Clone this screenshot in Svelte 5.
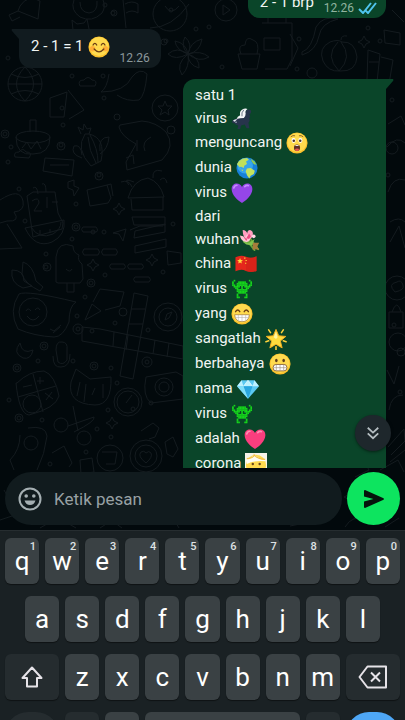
<script>
  const lines = [
    { text: 'satu 1' },
    { text: 'virus', emoji: 'skunk', low: true },
    { text: 'menguncang', emoji: 'gasp' },
    { text: 'dunia', emoji: 'earth' },
    { text: 'virus', emoji: 'purple' },
    { text: 'dari' },
    { text: 'wuhan', emoji: 'bouquet', low: true, tight: true },
    { text: 'china', emoji: 'flag' },
    { text: 'virus', emoji: 'alien' },
    { text: 'yang', emoji: 'grin' },
    { text: 'sangatlah', emoji: 'star' },
    { text: 'berbahaya', emoji: 'grimace' },
    { text: 'nama', emoji: 'gem' },
    { text: 'virus', emoji: 'alien' },
    { text: 'adalah', emoji: 'pink' },
    { text: 'corona', emoji: 'bandage' }
  ];
  const top = [...'qwertyuiop'];
  const middle = [...'asdfghjkl'];
  const bottom = [...'zxcvbnm'];

  const alienRows = [
    '.#.........#.',
    '#...#####...#',
    '#..#######..#',
    '##.#######.##',
    '.####.#.####.',
    '..##..#..##..',
    '...#######...',
    '...#######...',
    '....#####....',
    '...#.....#...',
    '...#.....#...',
    '...##...##...'
  ];
  const alienCells = alienRows.flatMap((row, y) =>
    [...row].flatMap((c, x) => (c === '#' ? [{ x, y }] : []))
  );

  const dots = [
    [5, 134], [63, 125], [105, 5], [171, 10], [61, 145], [99, 175], [76, 204], [117, 49], [11, 147], [8, 162],
    [19, 189], [25, 221], [76, 227], [93, 232], [104, 232], [72, 239], [46, 254], [46, 267], [91, 283],
    [105, 275], [163, 272], [173, 224], [85, 297], [77, 316], [78, 329], [115, 323], [92, 331], [44, 346],
    [17, 368], [94, 366], [111, 368], [38, 361], [73, 361], [148, 330], [147, 362], [117, 383], [9, 400],
    [19, 418], [42, 420], [108, 410], [97, 429], [111, 437], [50, 464], [86, 452], [133, 409], [151, 403],
    [113, 13], [103, 76], [72, 76], [104, 98], [62, 108], [8, 58], [166, 41], [188, 106], [196, 29],
    [209, 27], [222, 67], [297, 69], [299, 39], [380, 41], [368, 28], [392, 100], [388, 175], [394, 325], [400, 392]
  ];
  const rings = [
    [61, 146, 4], [117, 117, 3], [99, 176, 4], [76, 227, 4], [47, 267, 4], [91, 283, 4], [78, 329, 5],
    [94, 366, 4], [147, 362, 5], [44, 346, 4], [17, 368, 4], [19, 418, 4], [171, 130, 4], [114, 13, 3],
    [164, 42, 3], [312, 73, 5], [5, 134, 4], [123, 312, 4], [392, 148, 6], [401, 352, 4]
  ];
  const sparkles = [[119, 209], [93, 265], [152, 260], [112, 423], [364, 42], [200, 492], [350, 497]];
</script>

{#snippet face()}
  <circle cx="12" cy="12" r="11.5" fill="#fbc02b" />
  <circle cx="12" cy="11.4" r="10.4" fill="#ffda4e" />
{/snippet}

{#snippet emoji(name)}
  <svg class="emoji" viewBox="0 0 24 24" role="img" aria-label={name}>
    {#if name === 'smile'}
      {@render face()}
      <circle cx="5" cy="14" r="3" fill="#ff9d2e" opacity=".7" />
      <circle cx="19" cy="14" r="3" fill="#ff9d2e" opacity=".7" />
      <path d="M5.5 9.8q2-3.6 4 0M14.5 9.8q2-3.6 4 0M6.7 14.2q5.3 6 10.6 0" fill="none" stroke="#6c3d14" stroke-width="1.4" stroke-linecap="round" />
    {:else if name === 'gasp'}
      {@render face()}
      <ellipse cx="8.3" cy="9.3" rx="2.2" ry="2.7" fill="#fff" />
      <ellipse cx="15.7" cy="9.3" rx="2.2" ry="2.7" fill="#fff" />
      <circle cx="8.5" cy="9.6" r="1.4" fill="#4e342e" />
      <circle cx="15.5" cy="9.6" r="1.4" fill="#4e342e" />
      <path d="M5.500 5q2-1.800 4-1M14.500 4q2-.8 4 1" fill="none" stroke="#8b5a1b" stroke-linecap="round" />
      <ellipse cx="12" cy="17.300" rx="3.300" ry="3.600" fill="#5d3022" />
      <path d="M9.600 15.300q2.400-2 4.800 0z" fill="#fff" />
      <ellipse cx="12" cy="19.300" rx="2.200" ry="1.300" fill="#ef5350" />
    {:else if name === 'grin'}
      {@render face()}
      <path d="M5 9.5q2.2-3.8 4.6 0M14.4 9.5q2.3-3.8 4.6 0" fill="none" stroke="#6c3d14" stroke-width="1.5" stroke-linecap="round" />
      <path d="M4 12.8h16q-.5 7.6-8 7.6t-8-7.6z" fill="#fff" stroke="#9b6a2b" stroke-width=".7" />
      <path d="M4.5 15.8h15M8 13v6M12 13v7M16 13v6" stroke="#b5afa5" stroke-width=".6" />
    {:else if name === 'grimace'}
      {@render face()}
      <ellipse cx="8" cy="8.2" rx="1.4" ry="1.9" fill="#5d3b1a" />
      <ellipse cx="16" cy="8.2" rx="1.4" ry="1.9" fill="#5d3b1a" />
      <rect x="4.5" y="12.5" width="15" height="7" rx="3.2" fill="#fff" stroke="#8b6236" />
      <path d="M5 16h14M8 13v6M12 13v6M16 13v6" stroke="#9e917f" stroke-width=".7" />
    {:else if name === 'bandage'}
      <rect width="24" height="24" fill="#f6f4e8" />
      <circle cx="12" cy="13" r="11" fill="#ffda4e" />
      <path d="M1 8Q7 6 10 1q5 6 13 6l-1 2Q9 8 2 12z" fill="#fffdf2" />
      <path d="M2 6q7 0 8-4 4 5 12 5" fill="none" stroke="#f2be3f" stroke-width="1.3" />
      <circle cx="8.5" cy="12" r="1.3" fill="#6c481b" />
      <circle cx="16" cy="12" r="1.3" fill="#6c481b" />
      <path d="M8 19q4-3 8 0" fill="none" stroke="#6c481b" />
    {:else if name === 'purple' || name === 'pink'}
      <path d="M12 23C7 19.5 1 14.5.7 8.2.5 3.6 3.5 1.7 6.2 1.7c2.7 0 4.7 1.5 5.8 3.8 1.1-2.3 3.1-3.8 5.8-3.8 2.7 0 5.7 1.9 5.5 6.5C23 14.5 17 19.5 12 23z" fill={name === 'pink' ? '#fa3e7e' : '#9546e8'} />
      <path d="M3 6.5q1-3 3.5-3M15 5q2-2 4-1" fill="none" stroke={name === 'pink' ? '#ff8db3' : '#c58bff'} stroke-width="1.8" stroke-linecap="round" />
    {:else if name === 'earth'}
      <circle cx="12" cy="12" r="11.5" fill="#1780d8" />
      <circle cx="10" cy="9.5" r="8.5" fill="#35a4ed" />
      <path d="M3 4.500 7 1.800l5-.8 2 2-3 2 1 2.500-3 2-.5 2.500-3-1.500-2 .5 2 2.500 2.500.5-1 1.500L3.500 10.500 1 8z" fill="#bfe05c" />
      <path d="m12 12.500 4-.5 4.500 3-1 3.500-3.500 2-1.500 3-2.500-3.500-1.500-4.500z" fill="#c4e35d" />
      <path d="m16 2 4 2.500 2.500 4-3-.5-2-2.500z" fill="#8fcb54" />
    {:else if name === 'flag'}
      <path d="M.5 4.500q6-3 11.500-.5t11.500-.5v16q-6 2.500-11.500 0T.5 20z" fill="#e5261c" />
      <path d="M12 4q6 2.500 11.500-.5v16q-6 2.500-11.500 0z" fill="#c81e17" opacity=".45" />
      <path d="m5.500 5.500.9 2.100 2.300.2-1.800 1.500.6 2.200-2-1.200-2 1.200.6-2.200-1.800-1.500 2.300-.2z" fill="#ffd83b" />
      <path d="M10 5h1.300v1.300H10zM11.500 7.500h1.300v1.300h-1.300zM11 10.500h1.300v1.300H11z" fill="#ffd83b" />
    {:else if name === 'star'}
      <path d="m12 1.500 3 7 7.700.7-5.900 5 1.900 7.500-6.700-4-6.700 4 1.900-7.500-5.900-5L9 8.500z" fill="#ffdc3d" stroke="#f7ae20" stroke-linejoin="round" />
      <path d="m12 4 1.800 6L12 12 9.500 10z" fill="#fff6a3" />
      <path d="m4 2 2 3M20 2l-2 3M1 15l3-1M23 15l-3-1M12 20.500V24" stroke="#ffd43d" stroke-width="1.700" stroke-linecap="round" />
    {:else if name === 'gem'}
      <path d="M5 2.500h14l5 6.500L12 22.500 0 9z" fill="#5cc9f2" />
      <path d="M5 2.500 7 9H0zM12 2.500 17 9H7zM19 2.500 24 9h-7z" fill="#bdf1ff" />
      <path d="M7 9h10l-5 13.500z" fill="#29a6df" />
      <path d="M0 9h7l5 13.500z" fill="#82def9" />
      <path d="m7 9 5-6.500L17 9" fill="none" stroke="#effdff" stroke-width=".7" />
    {:else if name === 'alien'}
      <g transform="translate(1.2 2) scale(1.66)">
        {#each alienCells as c}
          <rect x={c.x} y={c.y} width="1.1" height="1.1" fill="#16d51c" />
        {/each}
      </g>
    {:else if name === 'skunk'}
      <path d="M15 9q0-6 3-7 4-1 4 2 0 2-2 3 2 2 0 4 1 3-1 5l1 6h-3l-2-4-4 1-1 4H7l1-4q-3 0-4-2-3 0-3-2 1-3 5-3 2-2 5-2 3 0 4-1z" fill="#27344c" />
      <path d="M6 12q1-3 4-4-1-4 2-6 3-2 6-1-3 2-2 5 0 3-2 5-4 0-8 1z" fill="#f6f7f9" />
      <path d="M12 9q-1-4 2-7" fill="none" stroke="#39475f" stroke-width=".8" />
      <path d="M2 14q2-2 5-2l-3 3z" fill="#e7e9ef" />
      <circle cx="5.5" cy="15.500" r=".7" fill="#dbe5f3" />
    {:else if name === 'bouquet'}
      <path d="m10 12 11 10M12 10l8 11M9 13l8 10" stroke="#68a538" stroke-width="2" stroke-linecap="round" />
      <path d="m15 15 7 0-2 4 2 4-4-1-3 1z" fill="#a67c3b" />
      <path d="M7 12q2 5 6 2l4-3-3 7-6-1-4-3z" fill="#7ec34d" />
      <path d="M4 1q4 0 5 4 0-4 3-4 4 1 3 6-1 4-5 4-6 0-6-10z" fill="#ff9fc0" />
      <path d="M1 7q4 0 6 3 0-4 3-4 3 2 2 6-2 3-5 2-5-1-6-7z" fill="#ffc4d5" />
      <path d="m11 5 2 3-2 3-3-1zM5 9l4 2-1 2z" fill="#ec4a82" />
      <circle cx="16" cy="8" r="2" fill="#ffd6e2" />
    {/if}
  </svg>
{/snippet}

{#snippet stamp(read)}
  <span class="stamp">
    <time>12.26</time>
    {#if read}
      <svg class="ticks" viewBox="0 0 20 12" role="img" aria-label="Dibaca">
        <path d="m1 7 4 4 8-10M7.500 8.500 10 11l8-10" />
      </svg>
    {/if}
  </span>
{/snippet}

<main class="app">
  <div class="room">
    <svg class="doodles" viewBox="0 0 405 530" preserveAspectRatio="xMidYMid slice" aria-hidden="true">
      {#each dots as [x, y]}<circle cx={x} cy={y} r="2" />{/each}
      {#each rings as [x, y, r]}<circle cx={x} cy={y} {r} />{/each}
      {#each sparkles as [x, y]}
        <path d="M{x} {y - 6}q1 5 6 6-5 1-6 6-1-5-6-6 5-1 6-6z" />
      {/each}
      <!-- cone, astronaut, flag, planet -->
      <path d="M20 6q8-12 20-5l-2 18-20-8zM18 11l-9 4 3 6 8-4M74 0q-4 10 6 17 12 6 22-4 4-6 1-13M80 2q0 10 9 11 9-1 8-12M123 0l3 28M125 4q7-4 13 0v9q-6-4-12 0" />
      <circle cx="170" cy="14" r="17" /><path d="M150 28q22 0 39-24M165 6q6 10 14 0M73 30l-1-10 5 4 7-1 3-4 2 10q-8 8-16 1z" />
      <!-- globe, cloud, whale, sail, badge -->
      <circle cx="25" cy="84" r="17" /><path d="M8 84h34M11 74q14 7 28 0M11 94q14-7 28 0M25 67q-17 17 0 34 17-17 0-34" />
      <path d="M80 86q-3-6 4-6 4-5 8 0 6 0 3 6zM101 92q6-4 8-18M101 92q24 0 31-15 8-10 15-3-2 22-8 26-12 2-22-5M50 117V98l17-6-3 25zM68 90l16 20-15 9" />
      <circle cx="165" cy="108" r="13" /><path d="m165 101 2 5 5 0-4 4 1 5-4-3-5 3 2-5-4-4 5 0z" />
      <!-- daisy, play, pot, backpack -->
      <path d="M188 54q-8-8-3-17 8 7 3 17 2-12 14-15-2 13-14 15 13-4 21 3-10 6-21-3 12 4 11 14-11-3-11-14 2 13-6 21-7-11 6-21-13 7-20 0 9-8 20 0-12-4-13-13 11 2 13 13" />
      <circle cx="226" cy="10" r="11" /><path d="m223 5 7 5-7 5zM238 54h22l-3 15h-15zM241 54q-4-9 4-9 1-10 8-5 7 2 4 14M262 23h30v36l-5 10h-22M268 23v-6h18v6M264 38h16v12h-16zM290 34l8 14-8 18" />
      <!-- banana, pumpkin, bamboo -->
      <path d="M302 52q10-3 14-25 7-12 22-8-17 4-19 17-3 15-17 19zM330 42q-12 6-7 19 5 11 17 10 16 1 17-14-2-16-15-15-4-3-12 0zM338 42q-14 14 1 29 14-14 2-29M341 40q0-5 6-4M368 50l12 4-3 28-10-2zM381 57l12 3-4 24M369 62h10M392 10l12 12M384 30l16 3v12l-15-2z" />
      <!-- bowl, cactus, sock -->
      <ellipse cx="33" cy="137" rx="17" ry="6" /><path d="M16 137q0 19 17 17 17 0 17-17M30 132v-12h6v12M22 148l5-6 4 7 6-8 4 8M85 134q-10 15 6 32l10-5q5-23-12-27zM88 137q1 14 8 26M90 135q8 14 8 27M82 158q-12-4-8-12 7-2 8 9M100 151q-2-14 9-14-1 12-9 17M81 134l-3-7 5 3 1-6 3 5 4-1-2 6M119 127q2 9 17 17l-10 18 1 8 35-10q14-14 4-28-10-10-24-11l-22 4zM126 158l7-3 1 9M137 151v-11M145 151q-4-9 6-14" />
      <!-- ticket, calendar, hut -->
      <path d="M45 158l29 2-2 16-29-5zM50 165h19M15 157q-2-5 4-5 4-5 7 0 7 0 3 6zM27 196l6-4h22l3 21 5 10-1 6-29 8zM33 188q4-3 5 6M42 184q4-2 4 8M32 201q7-5 7 2l-5 8h8M47 197v11M52 202h6M68 182l6-2v6l5 2-5 8-1-6-5-2zM87 190l20-5 4 13-3 5-18 3zM107 185l4-1 2 12M128 198q5-18 20-20 12 4 16 19zM131 199l1 11h31v-13M132 217h33v8h-31zM130 230l10-4h23M153 178q-1-10 9-7M129 185q-7-8 5-3M121 182q8-3 11 5M160 180q5-5 7 3" />
      <!-- melon, paper plane, chillies, ice pop -->
      <path d="M25 228l39-8q2 15-12 22-17 7-27-14zM31 227q8 13 22 7 8-5 8-12M40 230v5M50 229v4M0 200q20-13 23 1 2 10-9 11 7 10-7 9l-7 2M0 249l22-1-15-24M83 227h13q3 4 0 5H83q-3-3 0-5M84 249h14q3 3 0 6H84q-3-3 0-6M103 249h13q3 3 0 6h-13q-3-3 0-6M113 233l13-4-3 12-4-7z" />
      <path d="M12 270q12 0 12 11l8 5-9 2q-13-5-11-18zM23 262q10 3 13 19l7 6-3 4q-15-7-18-17zM56 282v-25q2-17 17-11 0 7 6 9-2 5 3 9l1 15-3 4H58zM67 283v9h7v-9M66 269q4 4 6 0M135 231l30-7v8l-31 6zM135 246l31-7v8l-31 6zM111 264h13q3 3 0 5h-13q-3-3 0-5M129 264h13q3 3 0 5h-13q-3-3 0-5M135 277h14q3 3 0 5h-14q-3-3 0-5M167 251l14 2v10l-13 2z" />
      <!-- chat sticker, pen, crossword, compass -->
      <path d="M19 294q8-4 57 8-7 4-7 20-6 15-15 15-20-1-36-8-10-18 1-35zM50 329l4 2 7-6M53 333l7-6M85 320l7-16 9 7zM93 302l7-13 24 3-4 14-15 4M134 293l14 3-15 83-13-3zM100 329l83 17v13l-101-18v-14zM114 332l-1 14M128 335l-2 15M155 340l-2 14M169 343l-2 14M131 309h14M129 324h14" />
      <circle cx="33" cy="312" r="14" /><circle cx="168" cy="317" r="14" /><circle cx="168" cy="317" r="9" /><path d="M26 311q2-4 5 0M35 310q3-4 5 0M27 316q6 8 12 0M165 320l2-6 5-2-3 6z" />
      <!-- moon, clip, calculator, cat, stopwatch, camera -->
      <path d="M20 343q-8 10 3 15 8 2 10-8-11 5-13-7zM56 350q0-9 6-8 6 0 5 8v10q-4 6-9 2zM53 356q0 12 8 11 9 0 9-13M17 383q12-12 27-12 11 4 15 25-3 12-30 19-10-1-13-32zM33 374l10 38M18 397l38-11M23 387l9-2M40 377v7M37 381h7M45 393l8 6M52 392l-6 8M76 369l14 10 21-2q1 28-16 28-28-1-24-23zM80 382l-3 14M86 384l-2 18M103 384v14M95 388l-3 7" />
      <circle cx="32" cy="404" r="9" /><circle cx="128" cy="402" r="14" /><circle cx="128" cy="402" r="11" /><path d="M126 403l6-8M146 377l30-5 7 4v23l-32 4q-9-7-5-26z" /><circle cx="164" cy="387" r="9" /><circle cx="164" cy="387" r="5" />
      <!-- scissors, paw, cup, roundels -->
      <circle cx="61" cy="425" r="7" /><circle cx="84" cy="438" r="7" /><path d="M68 426l26-9q2 4-20 15M73 406l5 25M28 428q18-3 19 8-2 18-10 34M20 435q0 15-10 25l4 10M52 453l12-7 8 17-3 4M141 431l12-8 6 5-4 9-6 2M165 442l8-5 5 12-5 8-6-3z" /><circle cx="31" cy="443" r="7" /><circle cx="110" cy="458" r="13" /><circle cx="146" cy="456" r="16" /><circle cx="146" cy="456" r="11" /><path d="M146 463q-9-7-5-11 3-2 5 1 3-3 5 0 2 4-5 10M102 452h15l-2 12h-9M80 460l12-2 2 14-13 2z" />
      <!-- right margin and the strip round the text box -->
      <path d="M388 124l13-8 4 9M387 147q10-12 18-4M388 192q5-16 17-12M390 222q9-6 15 0M390 242l9-16 6 22M395 292q-8-8 2-10 4-3 6 3 2 5-8 7M389 312h14v16h-14zM392 312q5-14 9 0M387 370l7 14 5-18M389 410q2-15 14-15M388 447l16-18 1 12-14 14M390 462l15-12" />
      <circle cx="397" cy="288" r="12" /><circle cx="398" cy="342" r="9" />
      <path d="M4 490l14 24-18 6M40 528q18-14 36 0M100 528q12-10 22 0M160 523l13-5 6 10M290 526l20-4 5-12M345 527q8-13 20-7M352 463l12-2 5 9-14 7M380 470l18-10 6 12M385 527l14-9" />
    </svg>

    <section class="chat" aria-label="Percakapan">
      <div class="thread">
        <article class="bubble out short joined">
          <p class="line">2 - 1 brp</p>
          {@render stamp(true)}
        </article>
        <article class="bubble in short">
          <svg class="tail" viewBox="0 0 8 10" aria-hidden="true"><path d="M8 0H1q-1 1 0 2l7 8z" /></svg>
          <p class="line tall">2 - 1 = 1 {@render emoji('smile')}</p>
          {@render stamp(false)}
        </article>
        <article class="bubble out long">
          <svg class="tail" viewBox="0 0 8 10" aria-hidden="true"><path d="M0 0h7q1 1 0 2l-7 8z" /></svg>
          {#each lines as l}
            <p class="line" class:tall={l.emoji && !l.low} class:tight={l.tight}>
              {l.text}{#if l.emoji}{@render emoji(l.emoji)}{/if}
            </p>
          {/each}
        </article>
      </div>
      <button class="jump" aria-label="Ke pesan terbaru">
        <svg viewBox="0 0 16 16" aria-hidden="true"><path d="m2 2 6 5.500L14 2M2 8.500 8 14l6-5.500" /></svg>
      </button>
    </section>

    <form class="composer" onsubmit={(e) => e.preventDefault()}>
      <div class="field">
        <button type="button" class="face" aria-label="Emoji">
          <svg viewBox="0 0 24 24" aria-hidden="true">
            <circle cx="12" cy="12" r="10.5" fill="none" stroke="currentColor" stroke-width="2" />
            <circle cx="8.2" cy="9" r="1.8" fill="currentColor" />
            <circle cx="15.8" cy="9" r="1.8" fill="currentColor" />
            <path d="M6.500 13.500h11q-1.500 4.500-5.500 4.500t-5.500-4.500z" fill="currentColor" />
          </svg>
        </button>
        <input type="text" placeholder="Ketik pesan" aria-label="Ketik pesan" />
      </div>
      <button class="send" aria-label="Kirim">
        <svg viewBox="0 0 20 18" aria-hidden="true">
          <path d="M1 0 19 8q2 1 0 2L1 18q-1 0-1-1v-5.500L9.500 9 0 6.500V1q0-1 1-1z" />
        </svg>
      </button>
    </form>
  </div>

  <section class="keyboard" aria-label="Papan tik">
    <div class="row">
      {#each top as k, i}
        <button class="key">{k}<sup>{(i + 1) % 10}</sup></button>
      {/each}
    </div>
    <div class="row inset">
      {#each middle as k}<button class="key">{k}</button>{/each}
    </div>
    <div class="row">
      <button class="key dim wide" aria-label="Shift">
        <svg class="shift" viewBox="0 0 22 22" aria-hidden="true"><path d="M11 1.500 20.500 12H16v8.500H6V12H1.500z" /></svg>
      </button>
      {#each bottom as k}<button class="key">{k}</button>{/each}
      <button class="key dim wide" aria-label="Hapus">
        <svg class="erase" viewBox="0 0 30 24" aria-hidden="true"><path d="M9.500 1.500H28v21H9.500L1.500 12zM13 7.500l9 9M22 7.500l-9 9" /></svg>
      </button>
    </div>
    <div class="row">
      <button class="key dim wide round" aria-label="Simbol"></button>
      <button class="key dim" aria-label="Koma"></button>
      <button class="key" aria-label="Bahasa"></button>
      <button class="key space" aria-label="Spasi"></button>
      <button class="key dim" aria-label="Titik"></button>
      <button class="key wide round enter" aria-label="Enter"></button>
    </div>
  </section>
</main>

<style>
  :global(body) {
    margin: 0;
    background: #02090c;
  }
  .app {
    display: grid;
    grid-template-rows: 1fr 190px;
    height: 100vh;
    overflow: hidden;
    background: #02090c;
    color: #f1f5f3;
    font-family: Roboto, 'Noto Sans', sans-serif;
  }
  button,
  input {
    margin: 0;
    padding: 0;
    border: 0;
    font-family: inherit;
    color: inherit;
    background: none;
  }
  .room {
    position: relative;
    display: flex;
    flex-direction: column;
    min-height: 0;
  }
  .doodles {
    position: absolute;
    inset: 0;
    width: 100%;
    height: 100%;
    fill: none;
    stroke: #141b1f;
    stroke-width: 1;
  }
  .chat {
    position: relative;
    flex: 1;
    min-height: 0;
    overflow: hidden;
  }
  .thread {
    display: flex;
    flex-direction: column;
    gap: 11px;
    margin-top: -18px;
    padding: 0 19px;
  }
  .bubble {
    position: relative;
    box-sizing: border-box;
    border-radius: 12px;
    padding: 5px 12px;
  }
  .in {
    align-self: flex-start;
    background: #111b1f;
    border-top-left-radius: 0;
  }
  .out {
    align-self: flex-end;
    background: #0a4529;
    border-top-right-radius: 0;
  }
  .short {
    display: flex;
    align-items: flex-end;
    gap: 10px;
    padding: 5px 11px 3px 12px;
  }
  .short .line {
    padding-bottom: 6px;
  }
  .joined {
    padding: 9px 8px 3px 12px;
  }
  .short.joined .line {
    padding-bottom: 1px;
  }
  .long {
    width: 50.2%;
    min-width: 203px;
  }
  .tail {
    position: absolute;
    top: 0;
    width: 8px;
    height: 10px;
  }
  .in .tail {
    right: 100%;
    fill: #111b1f;
  }
  .out .tail {
    left: 100%;
    fill: #0a4529;
  }
  .line {
    display: flex;
    align-items: center;
    gap: 4px;
    height: 23px;
    margin: 0;
    font-size: 15px;
    line-height: 23px;
    white-space: nowrap;
  }
  .tall {
    height: 25px;
  }
  .tight {
    gap: 0;
  }
  .emoji {
    width: 22px;
    height: 22px;
    flex: none;
  }
  .stamp {
    display: flex;
    align-items: center;
    gap: 4px;
    font-size: 12px;
    line-height: 14px;
    color: #8b979b;
  }
  .out .stamp {
    color: #90b39f;
  }
  .ticks {
    width: 20px;
    height: 12px;
    fill: none;
    stroke: #4fc4ee;
    stroke-width: 2;
  }
  .jump {
    position: absolute;
    right: 14px;
    bottom: 17px;
    display: grid;
    place-items: center;
    width: 36px;
    height: 36px;
    border-radius: 50%;
    background: #1e272c;
    box-shadow: 0 1px 3px rgba(0, 0, 0, 0.5);
  }
  .jump svg {
    width: 14px;
    height: 14px;
    fill: none;
    stroke: #b5bec2;
    stroke-width: 2;
  }
  .composer {
    position: relative;
    display: flex;
    gap: 5px;
    padding: 4px 5px 5px;
  }
  .field {
    flex: 1;
    display: flex;
    align-items: center;
    gap: 12px;
    min-width: 0;
    height: 53px;
    padding: 0 13px;
    box-sizing: border-box;
    border-radius: 27px;
    background: #111b1e;
  }
  .face {
    display: block;
    width: 24px;
    height: 24px;
    color: #a5afb2;
  }
  .face svg {
    display: block;
  }
  .field input {
    flex: 1;
    min-width: 0;
    outline: none;
    font-size: 17px;
    line-height: 24px;
  }
  .field input::placeholder {
    color: #98a1a4;
    opacity: 1;
  }
  .send {
    flex: none;
    display: grid;
    place-items: center;
    width: 53px;
    height: 53px;
    border-radius: 50%;
    background: #0de45f;
  }
  .send svg {
    width: 20px;
    height: 18px;
    fill: #06120c;
  }
  .keyboard {
    position: relative;
    display: flex;
    flex-direction: column;
    gap: 12px;
    padding: 7px 5px 0;
    border-top: 1px solid #262d30;
    background: #1a2124;
    overflow: hidden;
  }
  .row {
    flex: none;
    display: flex;
    gap: 6px;
  }
  .inset {
    padding: 0 20px;
  }
  .key {
    position: relative;
    flex: 34 1 0;
    display: grid;
    place-items: center;
    height: 46px;
    border-radius: 6px;
    background: #3a4144;
    color: #fff;
    font-size: 26px;
    line-height: 30px;
    box-shadow: 0 1px 1px rgba(0, 0, 0, 0.45);
  }
  .key sup {
    position: absolute;
    top: 3px;
    right: 3px;
    font-size: 11px;
    font-weight: 500;
    line-height: 12px;
    color: #dfe2e4;
  }
  .dim {
    background: #252c2f;
  }
  .wide {
    flex-grow: 54;
  }
  .space {
    flex-grow: 154;
  }
  .round {
    border-radius: 23px;
  }
  .enter {
    background: #4ea7f6;
  }
  .key svg {
    fill: none;
    stroke: #e6e3e8;
    stroke-width: 2;
    stroke-linejoin: round;
  }
  .shift {
    width: 22px;
    height: 22px;
  }
  .erase {
    width: 30px;
    height: 24px;
  }
</style>
